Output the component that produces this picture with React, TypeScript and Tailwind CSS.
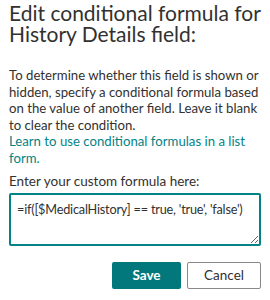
export default function App() {
  return (
    <div className="w-[270px] h-[300px] bg-white px-[9px] text-[#323130] font-['Lato',sans-serif] overflow-hidden">
      <h2 className="pt-[2px] text-[21px] leading-[21px] font-normal">
        Edit conditional formula for History Details field:
      </h2>
      <p className="mt-[23px] text-[13.2px] leading-[16.5px]">
        To determine whether this field is shown or hidden, specify a conditional formula based on
        the value of another field. Leave it blank to clear the condition.{" "}
        <a className="block text-[#038387]">Learn to use conditional formulas in a list form.</a>
      </p>
      <label className="block mt-[7px] text-[13.5px] leading-[16.5px]">
        Enter your custom formula here:
      </label>
      <textarea
        className="block mt-[3px] w-[252px] h-[53px] resize-y border-2 border-[#038387] rounded-[2px] px-[6px] pt-[6px] text-[12.7px] leading-[16px] tracking-[-0.2px] text-[#323130] outline-none"
        defaultValue="=if([$MedicalHistory] == true, 'true', 'false')"
      />
      <div className="flex justify-end gap-[6px] mt-[16px]">
        <button className="w-[69px] h-[27px] bg-[#03787c] text-white text-[13.5px] font-bold rounded-[2px]">
          Save
        </button>
        <button className="w-[74px] h-[27px] bg-white border border-[#8a8886] text-[13.5px] rounded-[2px]">
          Cancel
        </button>
      </div>
    </div>
  );
}
